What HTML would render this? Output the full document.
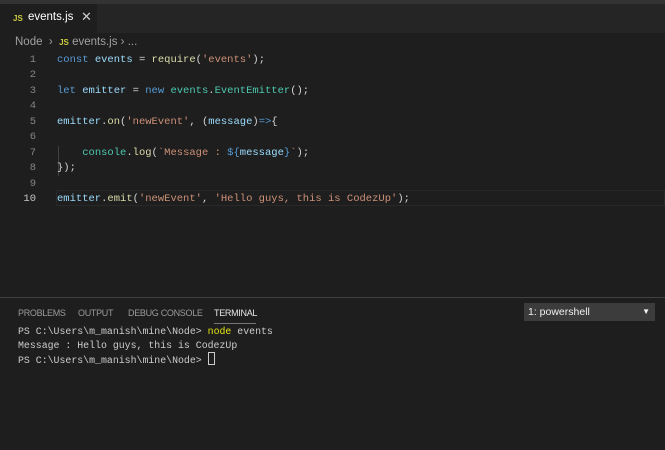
<!DOCTYPE html><html><head><style>
body{margin:0;width:665px;height:449px;background:#1e1e1e;overflow:hidden;position:relative;font-family:"Liberation Sans",sans-serif}
.top{position:absolute;left:0;top:0;width:665px;height:4px;background:#333}
.tabbar{position:absolute;left:0;top:4px;width:665px;height:29px;background:#252526}
.tab{position:absolute;left:0;top:0;width:97px;height:29px;background:#1e1e1e;color:#fff;font-size:11.5px}
.js{color:#cbcb41;font-weight:bold;font-size:8px;font-family:"Liberation Sans",sans-serif}
.crumb{position:absolute;left:15px;top:36px;color:#a0a0a0;font-size:11.5px}
.code{position:absolute;left:0;top:53px;font-family:"Liberation Mono",monospace;font-size:10.5px;line-height:15.45px;white-space:pre;color:#d4d4d4}
.ln{position:absolute;left:0;width:36px;text-align:right;color:#858585}
.tx{position:absolute;left:57px}
.k{color:#569cd6}.v{color:#9cdcfe}.f{color:#dcdcaa}.s{color:#ce9178}.c{color:#4ec9b0}
.panel{position:absolute;left:0;top:297px;width:665px;height:152px;border-top:1px solid #414141;background:#1e1e1e}
.pt{position:absolute;top:10px;font-size:9px;color:#9a9a9a;letter-spacing:-0.3px}
.term{position:absolute;left:18px;top:27px;font-family:"Liberation Mono",monospace;font-size:9.9px;line-height:13.5px;white-space:pre;color:#ccc}
.sel{position:absolute;left:524px;top:5px;width:131px;height:18px;background:#3c3c3c;color:#f0f0f0;font-size:10.5px;line-height:18px;padding-left:4px;box-sizing:border-box}
</style></head><body>
<div class="top"></div>
<div class="tabbar"><div class="tab"><span class="js" style="position:absolute;left:13px;top:10px">JS</span><span style="position:absolute;left:28px;top:7px">events.js</span><span style="position:absolute;left:81px;top:5px;color:#ccc;font-size:13px">✕</span></div></div>
<div class="crumb">Node &nbsp;›&nbsp; <span class="js">JS</span> events.js › ...</div>
<div style="position:absolute;left:56px;top:190px;width:609px;height:16px;border:1px solid #282828;box-sizing:border-box"></div>
<div style="position:absolute;left:58px;top:146px;width:1px;height:30px;background:#404040"></div>
<div class="code">
<div class="ln" style="top:0">1</div><div class="tx" style="top:0"><span class="k">const</span> <span class="v">events</span> = <span class="f">require</span>(<span class="s">'events'</span>);</div>
<div class="ln" style="top:15.45px">2</div>
<div class="ln" style="top:30.9px">3</div><div class="tx" style="top:30.9px"><span class="k">let</span> <span class="v">emitter</span> = <span class="k">new</span> <span class="c">events</span>.<span class="c">EventEmitter</span>();</div>
<div class="ln" style="top:46.35px">4</div>
<div class="ln" style="top:61.8px">5</div><div class="tx" style="top:61.8px"><span class="v">emitter</span>.<span class="f">on</span>(<span class="s">'newEvent'</span>, (<span class="v">message</span>)<span class="k">=&gt;</span>{</div>
<div class="ln" style="top:77.25px">6</div>
<div class="ln" style="top:92.7px">7</div><div class="tx" style="top:92.7px">    <span class="c">console</span>.<span class="f">log</span>(<span class="s">`Message : </span><span class="k">${</span><span class="v">message</span><span class="k">}</span><span class="s">`</span>);</div>
<div class="ln" style="top:108.15px">8</div><div class="tx" style="top:108.15px">});</div>
<div class="ln" style="top:123.6px">9</div>
<div class="ln" style="top:139.05px;color:#c6c6c6">10</div><div class="tx" style="top:139.05px"><span class="v">emitter</span>.<span class="f">emit</span>(<span class="s">'newEvent'</span>, <span class="s">'Hello guys, this is CodezUp'</span>);</div>
</div>
<div class="panel">
<span class="pt" style="left:18px">PROBLEMS</span><span class="pt" style="left:78px">OUTPUT</span><span class="pt" style="left:128px">DEBUG CONSOLE</span><span class="pt" style="left:214px;color:#e7e7e7">TERMINAL</span>
<div style="position:absolute;left:214px;top:25px;width:42px;height:1px;background:#777"></div>
<div class="sel">1: powershell<span style="position:absolute;right:5px;font-size:8px">▼</span></div>
<div class="term">PS C:\Users\m_manish\mine\Node&gt; <span style="color:#e5e510">node</span> events
Message : Hello guys, this is CodezUp
PS C:\Users\m_manish\mine\Node&gt; <span style="display:inline-block;width:5px;height:11px;border:1px solid #ccc;vertical-align:-2px"></span></div>
</div>
</body></html>
